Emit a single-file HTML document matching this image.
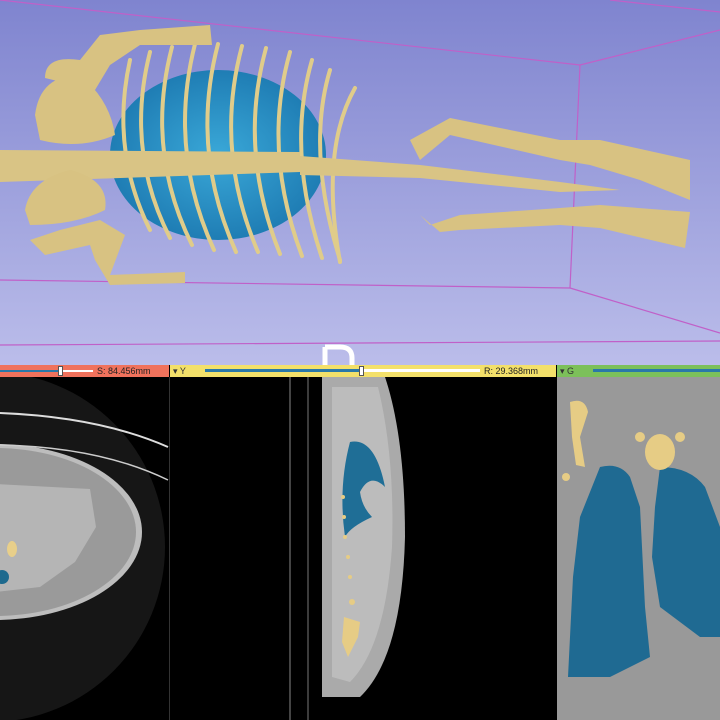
<!DOCTYPE html>
<html><head><style>
body{margin:0;width:720px;height:720px;overflow:hidden;background:#000;font-family:"Liberation Sans",sans-serif}
.bar{position:absolute;top:365px;height:12px;font-size:9px;line-height:12px}
</style></head><body>
<svg width="720" height="365" style="position:absolute;left:0;top:0">
<defs><linearGradient id="bg" x1="0" y1="0" x2="0" y2="1"><stop offset="0" stop-color="#7f84cf"/><stop offset="1" stop-color="#bbbdea"/></linearGradient>
<radialGradient id="rb" cx=".5" cy=".5" r=".5"><stop offset="0" stop-color="#3aa8d8"/><stop offset="1" stop-color="#1f7db4"/></radialGradient></defs>
<rect width="720" height="365" fill="url(#bg)"/>
<g stroke="#c060c8" stroke-width="1.2" fill="none">
<line x1="0" y1="0" x2="580" y2="65"/><line x1="580" y1="65" x2="720" y2="30"/>
<line x1="610" y1="0" x2="720" y2="12"/><line x1="580" y1="65" x2="570" y2="288"/>
<line x1="0" y1="280" x2="570" y2="288"/><line x1="570" y1="288" x2="720" y2="333"/>
<line x1="0" y1="345" x2="720" y2="341"/>
</g>
<ellipse cx="218" cy="155" rx="108" ry="85" fill="url(#rb)"/>
<g stroke="#e0cc8a" stroke-width="4" fill="none" stroke-linecap="round">
<path d="M130 60 Q110 150 150 230"/><path d="M150 52 Q125 150 170 238"/><path d="M172 47 Q145 150 192 245"/>
<path d="M195 44 Q168 150 214 250"/><path d="M218 44 Q190 150 236 252"/><path d="M242 46 Q214 150 258 252"/>
<path d="M266 48 Q238 150 280 254"/><path d="M290 52 Q262 150 302 256"/><path d="M312 60 Q286 150 322 258"/>
<path d="M330 70 Q306 150 340 260"/><path d="M355 88 Q320 150 340 262"/>
</g>
<path d="M0 150 L300 152 L300 172 L0 182 Z" fill="#d9c485"/>
<path d="M300 156 L420 165 L560 182 L620 190 L560 192 L420 178 L300 175Z" fill="#d9c485"/>
<g fill="#d8c282">
<path d="M35 115 Q40 75 80 75 Q110 100 115 135 Q80 150 40 140Z"/>
<path d="M25 210 Q30 180 70 170 Q110 180 105 210 Q75 225 30 225Z"/>
<path d="M45 78 Q45 55 80 60 L100 35 L140 30 L210 25 L212 45 L140 45 L110 65 L95 90Z"/>
<path d="M30 240 L60 230 L100 220 L125 235 L110 275 L185 272 L185 283 L110 285 L95 260 L90 245 L45 255Z"/>
<path d="M410 140 L450 118 L560 140 L600 140 L690 160 L690 200 L640 180 L590 165 L560 160 L450 135 L420 160Z"/>
<path d="M405 200 L430 225 L460 215 L560 208 L600 205 L690 212 L685 248 L600 228 L560 225 L460 230 L440 232 L420 215Z"/>
</g>
<path d="M325 347 L340 347 Q352 347 352 358 L352 365 M325 347 L325 365" stroke="#fff" stroke-width="5" fill="none"/>
</svg>
<div class="bar" style="left:0;width:169px;background:#f0725c">
<div style="position:absolute;left:0;top:5px;width:60px;height:2px;background:#2a78a8"></div>
<div style="position:absolute;left:60px;top:5px;width:33px;height:2px;background:#fff"></div>
<div style="position:absolute;left:58px;top:1px;width:5px;height:10px;background:#fff;border:1px solid #555;box-sizing:border-box"></div>
<span style="position:absolute;left:97px;color:#222">S: 84.456mm</span></div>
<div class="bar" style="left:170px;width:386px;background:#f3e06a">
<span style="position:absolute;left:3px;color:#333">▾ Y</span>
<div style="position:absolute;left:35px;top:4px;width:155px;height:3px;background:#2a78a8"></div>
<div style="position:absolute;left:190px;top:4px;width:120px;height:3px;background:#fff"></div>
<div style="position:absolute;left:189px;top:1px;width:5px;height:10px;background:#fff;border:1px solid #555;box-sizing:border-box"></div>
<span style="position:absolute;left:314px;color:#222">R: 29.368mm</span></div>
<div class="bar" style="left:557px;width:163px;background:#7cc05a">
<span style="position:absolute;left:3px;color:#333">▾ G</span>
<div style="position:absolute;left:36px;top:4px;width:127px;height:3px;background:#2a78a8"></div></div>
<svg width="720" height="343" style="position:absolute;left:0;top:377px">
<rect width="720" height="343" fill="#000"/>
<circle cx="-10" cy="170" r="175" fill="#161616"/>
<ellipse cx="-5" cy="155" rx="147" ry="88" fill="#bdbdbd"/>
<ellipse cx="-5" cy="155" rx="141" ry="84" fill="#9a9a9a"/>
<path d="M-5 107 L90 112 L96 150 L75 185 L40 210 L-5 215Z" fill="#b5b5b5"/>
<path d="M0 36 Q100 40 168 70" stroke="#ddd" stroke-width="2" fill="none"/>
<path d="M0 68 Q100 70 168 103" stroke="#ccc" stroke-width="1.5" fill="none"/>
<ellipse cx="12" cy="172" rx="5" ry="8" fill="#e8cf8a"/>
<circle cx="2" cy="200" r="7" fill="#1e6a8e"/>
<rect x="169" y="0" width="1" height="343" fill="#333"/>
<line x1="290" y1="0" x2="290" y2="343" stroke="#888"/><line x1="308" y1="0" x2="308" y2="343" stroke="#777"/>
<path d="M322 0 L385 0 Q405 60 405 160 Q402 280 360 320 L322 320 Z" fill="#aaaaaa"/>
<path d="M332 10 L378 10 Q395 80 392 170 Q385 270 350 305 L332 300 Z" fill="#bcbcbc"/>
<path d="M350 65 Q375 60 385 110 Q370 95 360 115 Q362 130 372 140 Q350 150 345 160 Q338 110 350 65Z" fill="#1f6e96"/>
<g fill="#e6cc85"><circle cx="343" cy="120" r="2"/><circle cx="344" cy="140" r="2"/><circle cx="345" cy="160" r="2"/><circle cx="348" cy="180" r="2"/><circle cx="350" cy="200" r="2"/><circle cx="352" cy="225" r="3"/><path d="M344 240 L360 245 L358 260 L348 280 L342 265Z"/></g>
<rect x="557" y="0" width="163" height="343" fill="#999"/>
<path d="M600 90 Q620 85 630 100 L640 130 L645 230 L650 280 L610 300 L568 300 L573 200 L580 140Z" fill="#1f6a92"/>
<path d="M660 90 Q690 90 705 110 L720 150 L720 260 L700 260 L660 230 L652 180 L655 130Z" fill="#1f6a92"/>
<g fill="#e6cc85"><path d="M570 25 Q585 20 588 35 L580 60 L585 90 L576 88 L572 60Z"/><ellipse cx="660" cy="75" rx="15" ry="18"/><circle cx="640" cy="60" r="5"/><circle cx="680" cy="60" r="5"/><circle cx="566" cy="100" r="4"/></g>
</svg>
</body></html>
